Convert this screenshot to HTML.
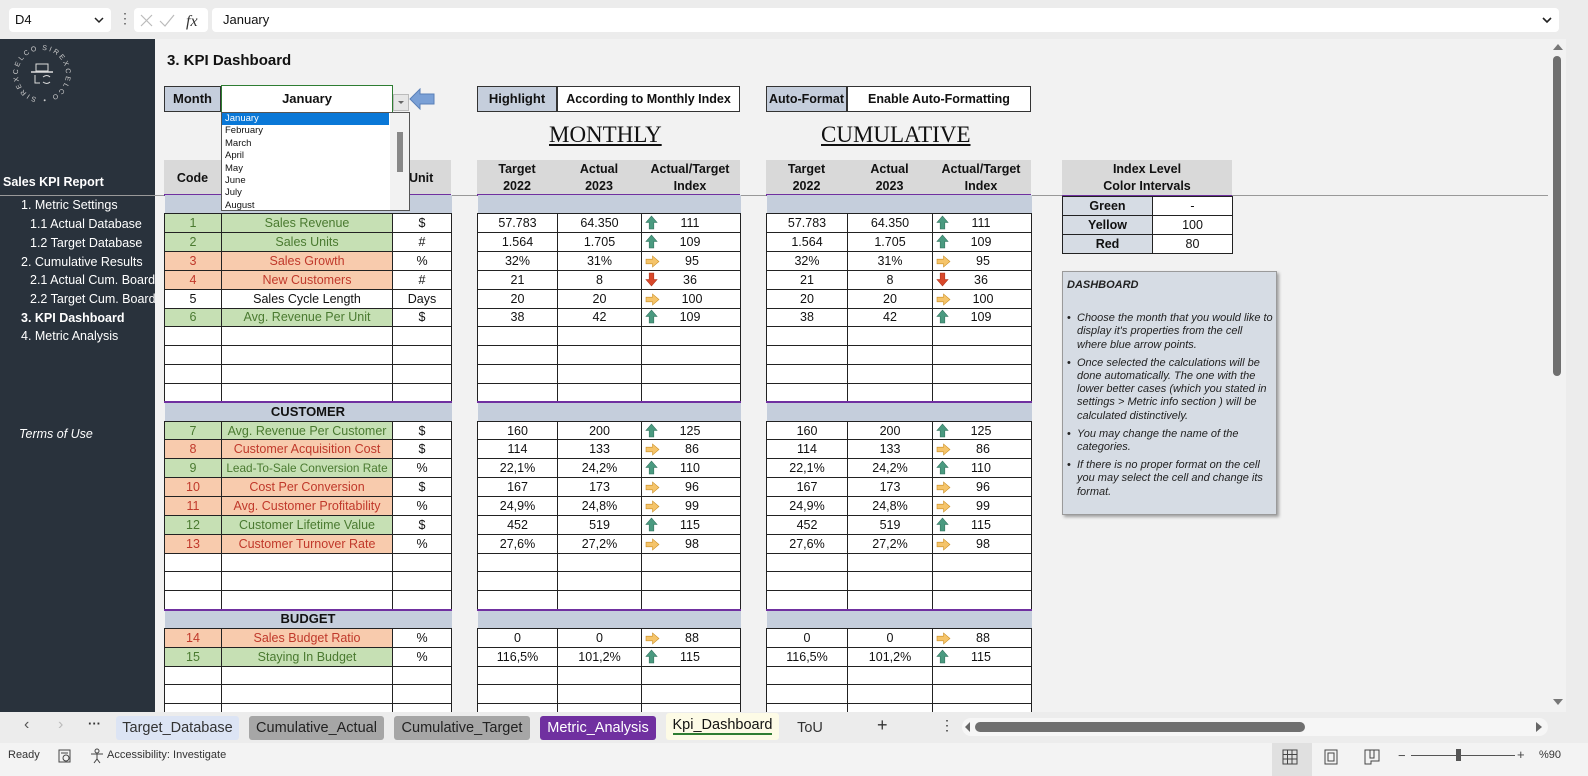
<!DOCTYPE html>
<html><head><meta charset="utf-8">
<style>
*{box-sizing:border-box;margin:0;padding:0}
body{width:1588px;height:776px;overflow:hidden;background:#ececec;font-family:"Liberation Sans",sans-serif;position:relative;color:#111}
.a{position:absolute}
table{border-collapse:collapse;table-layout:fixed;position:absolute}
td{border:1px solid #222;height:18.85px;padding:0;text-align:center;font-size:12.5px;white-space:nowrap;overflow:hidden;line-height:16px;background:#fff}
tr.band td{border:none;border-top:2px solid #7030a0;background:#c5cedc;font-weight:bold;font-size:13px}
tr.band0 td{border:none;background:#c5cedc}
td.g{background:#c6e0b4;color:#4a7a30}
td.o{background:#f8cbad;color:#c0392b}
td.ar{text-align:left;padding-left:3px}
td.ar svg{vertical-align:-3px}
td.ar span{display:inline-block;width:64px;text-align:center}
.hdr{position:absolute;background:#d9d9d9;border-bottom:2px solid #7030a0;font-weight:bold;font-size:12.5px;text-align:center;line-height:17px}
.nav{position:absolute;color:#fff;font-size:12.5px}
.tab{position:absolute;top:716px;height:24px;font-size:14.5px;line-height:24px;text-align:center;border-radius:3px}
</style></head><body>
<svg width="0" height="0" style="position:absolute">
<symbol id="up" viewBox="0 0 14 16"><path d="M7 1 L13 8 H9.5 V15 H4.5 V8 H1 Z" fill="#4a9a80" stroke="#2f6f5a" stroke-width=".6"/></symbol>
<symbol id="rt" viewBox="0 0 16 14"><path d="M1 4.5 H8 V1 L15 7 L8 13 V9.5 H1 Z" fill="#f5c46a" stroke="#c98d22" stroke-width=".6"/></symbol>
<symbol id="dn" viewBox="0 0 14 16"><path d="M4.5 1 H9.5 V8 H13 L7 15 L1 8 H4.5 Z" fill="#d9482b" stroke="#a83018" stroke-width=".6"/></symbol>
</svg>

<div class="a" style="left:0;top:0;width:1588px;height:39px;background:#ececec"></div>
<div class="a" style="left:9px;top:8px;width:102px;height:24px;background:#fff;border-radius:4px;font-size:13px;line-height:24px;padding-left:6px">D4<svg style="position:absolute;right:7px;top:9px" width="10" height="7"><path d="M1 1 L5 5 L9 1" stroke="#222" stroke-width="1.5" fill="none"/></svg></div>
<div class="a" style="left:118px;top:10px;font-size:14px;color:#555">&#8942;</div>
<div class="a" style="left:134px;top:8px;width:74px;height:24px;background:#fff;border-radius:4px"></div>
<svg class="a" style="left:138px;top:12px" width="70" height="18"><path d="M3 3 L14 14 M14 3 L3 14" stroke="#bbb" stroke-width="1.2"/><path d="M22 9 L27 14 L36 3" stroke="#bbb" stroke-width="1.2" fill="none"/><text x="48" y="14" font-family="Liberation Serif" font-style="italic" font-size="16" fill="#333">fx</text></svg>
<div class="a" style="left:212px;top:8px;width:1347px;height:24px;background:#fff;border-radius:4px;font-size:13px;line-height:24px;padding-left:11px">January<svg style="position:absolute;right:6px;top:8px" width="12" height="8"><path d="M2 2 L6 6 L10 2" stroke="#222" stroke-width="1.6" fill="none"/></svg></div>

<div class="a" style="left:155px;top:39px;width:1393px;height:673px;background:#f2f2f2"></div>
<div class="a" style="left:0;top:39px;width:155px;height:673px;background:#29323c"></div>
<div class="a" style="left:0;top:195px;width:1548px;height:1px;background:#999"></div>
<div class="a" style="left:1548px;top:39px;width:18px;height:673px;background:#f2f2f2"></div>
<div class="a" style="left:1553px;top:44px;width:0;height:0;border-left:5px solid transparent;border-right:5px solid transparent;border-bottom:6px solid #777"></div>
<div class="a" style="left:1553px;top:56px;width:8px;height:320px;background:#6f6f6f;border-radius:4px"></div>
<div class="a" style="left:1553px;top:699px;width:0;height:0;border-left:5px solid transparent;border-right:5px solid transparent;border-top:6px solid #777"></div>

<svg class="a" style="left:12px;top:44px" width="60" height="60" viewBox="0 0 60 60">
<defs><path id="cp" d="M30 6 A24 24 0 1 1 29.9 6"/></defs>
<text font-size="7" fill="#ccc" letter-spacing="2.2"><textPath href="#cp">SIREXCELCO • SIREXCELCO •</textPath></text>
<rect x="24" y="20" width="12" height="7" fill="none" stroke="#ddd"/><path d="M19 28 H41" stroke="#ddd" stroke-width="1.5"/>
<path d="M23 31 v8 h5 M31 33 q4 -3 7 0 M31 38 q4 3 7 0" stroke="#ddd" fill="none"/>
</svg>
<div class="nav" style="left:3px;top:175px;font-weight:bold">Sales KPI Report</div>
<div class="nav" style="left:21px;top:198px">1. Metric Settings</div>
<div class="nav" style="left:30px;top:217px">1.1 Actual Database</div>
<div class="nav" style="left:30px;top:236px">1.2 Target Database</div>
<div class="nav" style="left:21px;top:255px">2. Cumulative Results</div>
<div class="nav" style="left:30px;top:273px">2.1 Actual Cum. Board</div>
<div class="nav" style="left:30px;top:292px">2.2 Target Cum. Board</div>
<div class="nav" style="left:21px;top:311px;font-weight:bold">3. KPI Dashboard</div>
<div class="nav" style="left:21px;top:329px">4. Metric Analysis</div>
<div class="nav" style="left:19px;top:427px;font-style:italic">Terms of Use</div>

<div class="a" style="left:167px;top:52px;font-size:15px;font-weight:bold">3. KPI Dashboard</div>

<div class="a" style="left:164px;top:86px;width:57px;height:26px;background:#c5cedc;border:1px solid #333;font-weight:bold;font-size:13px;text-align:center;line-height:24px">Month</div>
<div class="a" style="left:221px;top:85px;width:172px;height:28px;background:#fff;border:1.5px solid #2e7d32;font-weight:bold;font-size:13px;text-align:center;line-height:26px">January</div>
<div class="a" style="left:393px;top:94px;width:16px;height:17px;background:#e6e6e6;border:1px solid #bbb"><div style="margin:6px auto 0;width:0;height:0;border-left:3px solid transparent;border-right:3px solid transparent;border-top:3px solid #666"></div></div>
<svg class="a" style="left:409px;top:88px" width="26" height="22"><path d="M1 11 L11 1 V6 H25 V16 H11 V21 Z" fill="#7aa0d6" stroke="#5a80b8"/></svg>

<div class="a" style="left:477px;top:86px;width:80px;height:26px;background:#c5cedc;border:1px solid #333;font-weight:bold;font-size:13px;text-align:center;line-height:24px">Highlight</div>
<div class="a" style="left:557px;top:86px;width:183px;height:26px;background:#fff;border:1px solid #333;font-weight:bold;font-size:12.5px;text-align:center;line-height:24px">According to Monthly Index</div>
<div class="a" style="left:766px;top:86px;width:81px;height:26px;background:#c5cedc;border:1px solid #333;font-weight:bold;font-size:12.5px;text-align:center;line-height:24px">Auto-Format</div>
<div class="a" style="left:847px;top:86px;width:184px;height:26px;background:#fff;border:1px solid #333;font-weight:bold;font-size:12.5px;text-align:center;line-height:24px">Enable Auto-Formatting</div>

<div class="a" style="left:549px;top:122px;font-family:'Liberation Serif',serif;font-size:23px;text-decoration:underline">MONTHLY</div>
<div class="a" style="left:821px;top:122px;font-family:'Liberation Serif',serif;font-size:23px;text-decoration:underline">CUMULATIVE</div>

<div class="hdr" style="left:164px;top:160px;width:287px;height:36px"><span style="position:absolute;left:0;width:57px;top:10px">Code</span><span style="position:absolute;left:245px;top:10px">Unit</span></div>
<div class="hdr" style="left:477px;top:160px;width:263px;height:36px"><span style="position:absolute;left:0;width:80px;top:1px">Target<br>2022</span><span style="position:absolute;left:80px;width:84px;top:1px">Actual<br>2023</span><span style="position:absolute;left:164px;width:98px;top:1px">Actual/Target<br>Index</span></div>
<div class="hdr" style="left:766px;top:160px;width:265px;height:36px"><span style="position:absolute;left:0;width:81px;top:1px">Target<br>2022</span><span style="position:absolute;left:81px;width:85px;top:1px">Actual<br>2023</span><span style="position:absolute;left:166px;width:98px;top:1px">Actual/Target<br>Index</span></div>
<div class="hdr" style="left:1062px;top:160px;width:170px;height:36px;border-bottom:1px solid #7030a0"><div style="padding-top:1px">Index Level<br>Color Intervals</div></div>

<table style="left:164px;top:195px;width:287px">
<colgroup><col style="width:57px"><col style="width:171px"><col style="width:59px"></colgroup>
<tr class="band0"><td colspan="3"></td></tr>
<tr><td class="g">1</td><td class="g">Sales Revenue</td><td>$</td></tr>
<tr><td class="g">2</td><td class="g">Sales Units</td><td>#</td></tr>
<tr><td class="o">3</td><td class="o">Sales Growth</td><td>%</td></tr>
<tr><td class="o">4</td><td class="o">New Customers</td><td>#</td></tr>
<tr><td>5</td><td>Sales Cycle Length</td><td>Days</td></tr>
<tr><td class="g">6</td><td class="g">Avg. Revenue Per Unit</td><td>$</td></tr>
<tr><td></td><td></td><td></td></tr><tr><td></td><td></td><td></td></tr><tr><td></td><td></td><td></td></tr><tr><td></td><td></td><td></td></tr>
<tr class="band"><td colspan="3">CUSTOMER</td></tr>
<tr><td class="g">7</td><td class="g">Avg. Revenue Per Customer</td><td>$</td></tr>
<tr><td class="o">8</td><td class="o">Customer Acquisition Cost</td><td>$</td></tr>
<tr><td class="g">9</td><td class="g" style="font-size:11.8px">Lead-To-Sale Conversion Rate</td><td>%</td></tr>
<tr><td class="o">10</td><td class="o">Cost Per Conversion</td><td>$</td></tr>
<tr><td class="o">11</td><td class="o">Avg. Customer Profitability</td><td>%</td></tr>
<tr><td class="g">12</td><td class="g">Customer Lifetime Value</td><td>$</td></tr>
<tr><td class="o">13</td><td class="o">Customer Turnover Rate</td><td>%</td></tr>
<tr><td></td><td></td><td></td></tr><tr><td></td><td></td><td></td></tr><tr><td></td><td></td><td></td></tr>
<tr class="band"><td colspan="3">BUDGET</td></tr>
<tr><td class="o">14</td><td class="o">Sales Budget Ratio</td><td>%</td></tr>
<tr><td class="g">15</td><td class="g">Staying In Budget</td><td>%</td></tr>
<tr><td></td><td></td><td></td></tr><tr><td></td><td></td><td></td></tr><tr><td></td><td></td><td></td></tr>
</table>

<!-- dropdown list (on top) -->
<div class="a" style="left:221px;top:112px;width:189px;height:99px;background:#fff;border:1px solid #555;font-size:9.5px;line-height:12.4px;overflow:hidden;z-index:10">
<div style="background:#0a78d7;color:#fff;margin-right:20px;padding-left:3px">January</div>
<div style="padding-left:3px">February<br>March<br>April<br>May<br>June<br>July<br>August</div>
<div style="position:absolute;left:168px;top:0;width:20px;height:98px;background:#f2f2f2"></div>
<div style="position:absolute;left:175px;top:19px;width:6px;height:40px;background:#888"></div>
</div>

<table style="left:477px;top:195px;width:263px">
<colgroup><col style="width:80px"><col style="width:84px"><col style="width:99px"></colgroup>
<tr class="band0"><td colspan="3"></td></tr>
<tr><td>57.783</td><td>64.350</td><td class="ar"><svg width="13" height="15"><use href="#up"/></svg><span>111</span></td></tr>
<tr><td>1.564</td><td>1.705</td><td class="ar"><svg width="13" height="15"><use href="#up"/></svg><span>109</span></td></tr>
<tr><td>32%</td><td>31%</td><td class="ar"><svg width="15" height="13"><use href="#rt"/></svg><span>95</span></td></tr>
<tr><td>21</td><td>8</td><td class="ar"><svg width="13" height="15"><use href="#dn"/></svg><span>36</span></td></tr>
<tr><td>20</td><td>20</td><td class="ar"><svg width="15" height="13"><use href="#rt"/></svg><span>100</span></td></tr>
<tr><td>38</td><td>42</td><td class="ar"><svg width="13" height="15"><use href="#up"/></svg><span>109</span></td></tr>
<tr><td></td><td></td><td></td></tr><tr><td></td><td></td><td></td></tr><tr><td></td><td></td><td></td></tr><tr><td></td><td></td><td></td></tr>
<tr class="band"><td colspan="3"></td></tr>
<tr><td>160</td><td>200</td><td class="ar"><svg width="13" height="15"><use href="#up"/></svg><span>125</span></td></tr>
<tr><td>114</td><td>133</td><td class="ar"><svg width="15" height="13"><use href="#rt"/></svg><span>86</span></td></tr>
<tr><td>22,1%</td><td>24,2%</td><td class="ar"><svg width="13" height="15"><use href="#up"/></svg><span>110</span></td></tr>
<tr><td>167</td><td>173</td><td class="ar"><svg width="15" height="13"><use href="#rt"/></svg><span>96</span></td></tr>
<tr><td>24,9%</td><td>24,8%</td><td class="ar"><svg width="15" height="13"><use href="#rt"/></svg><span>99</span></td></tr>
<tr><td>452</td><td>519</td><td class="ar"><svg width="13" height="15"><use href="#up"/></svg><span>115</span></td></tr>
<tr><td>27,6%</td><td>27,2%</td><td class="ar"><svg width="15" height="13"><use href="#rt"/></svg><span>98</span></td></tr>
<tr><td></td><td></td><td></td></tr><tr><td></td><td></td><td></td></tr><tr><td></td><td></td><td></td></tr>
<tr class="band"><td colspan="3"></td></tr>
<tr><td>0</td><td>0</td><td class="ar"><svg width="15" height="13"><use href="#rt"/></svg><span>88</span></td></tr>
<tr><td>116,5%</td><td>101,2%</td><td class="ar"><svg width="13" height="15"><use href="#up"/></svg><span>115</span></td></tr>
<tr><td></td><td></td><td></td></tr><tr><td></td><td></td><td></td></tr><tr><td></td><td></td><td></td></tr>
</table>

<table style="left:766px;top:195px;width:265px">
<colgroup><col style="width:81px"><col style="width:85px"><col style="width:99px"></colgroup>
<tr class="band0"><td colspan="3"></td></tr>
<tr><td>57.783</td><td>64.350</td><td class="ar"><svg width="13" height="15"><use href="#up"/></svg><span>111</span></td></tr>
<tr><td>1.564</td><td>1.705</td><td class="ar"><svg width="13" height="15"><use href="#up"/></svg><span>109</span></td></tr>
<tr><td>32%</td><td>31%</td><td class="ar"><svg width="15" height="13"><use href="#rt"/></svg><span>95</span></td></tr>
<tr><td>21</td><td>8</td><td class="ar"><svg width="13" height="15"><use href="#dn"/></svg><span>36</span></td></tr>
<tr><td>20</td><td>20</td><td class="ar"><svg width="15" height="13"><use href="#rt"/></svg><span>100</span></td></tr>
<tr><td>38</td><td>42</td><td class="ar"><svg width="13" height="15"><use href="#up"/></svg><span>109</span></td></tr>
<tr><td></td><td></td><td></td></tr><tr><td></td><td></td><td></td></tr><tr><td></td><td></td><td></td></tr><tr><td></td><td></td><td></td></tr>
<tr class="band"><td colspan="3"></td></tr>
<tr><td>160</td><td>200</td><td class="ar"><svg width="13" height="15"><use href="#up"/></svg><span>125</span></td></tr>
<tr><td>114</td><td>133</td><td class="ar"><svg width="15" height="13"><use href="#rt"/></svg><span>86</span></td></tr>
<tr><td>22,1%</td><td>24,2%</td><td class="ar"><svg width="13" height="15"><use href="#up"/></svg><span>110</span></td></tr>
<tr><td>167</td><td>173</td><td class="ar"><svg width="15" height="13"><use href="#rt"/></svg><span>96</span></td></tr>
<tr><td>24,9%</td><td>24,8%</td><td class="ar"><svg width="15" height="13"><use href="#rt"/></svg><span>99</span></td></tr>
<tr><td>452</td><td>519</td><td class="ar"><svg width="13" height="15"><use href="#up"/></svg><span>115</span></td></tr>
<tr><td>27,6%</td><td>27,2%</td><td class="ar"><svg width="15" height="13"><use href="#rt"/></svg><span>98</span></td></tr>
<tr><td></td><td></td><td></td></tr><tr><td></td><td></td><td></td></tr><tr><td></td><td></td><td></td></tr>
<tr class="band"><td colspan="3"></td></tr>
<tr><td>0</td><td>0</td><td class="ar"><svg width="15" height="13"><use href="#rt"/></svg><span>88</span></td></tr>
<tr><td>116,5%</td><td>101,2%</td><td class="ar"><svg width="13" height="15"><use href="#up"/></svg><span>115</span></td></tr>
<tr><td></td><td></td><td></td></tr><tr><td></td><td></td><td></td></tr><tr><td></td><td></td><td></td></tr>
</table>

<table style="left:1062px;top:196px;width:170px">
<colgroup><col style="width:90px"><col style="width:80px"></colgroup>
<tr><td style="background:#d6dce4;font-weight:bold">Green</td><td>-</td></tr>
<tr><td style="background:#d6dce4;font-weight:bold">Yellow</td><td>100</td></tr>
<tr><td style="background:#d6dce4;font-weight:bold">Red</td><td>80</td></tr>
</table>

<div class="a" style="left:1062px;top:271px;width:215px;height:244px;background:#d6dce4;border:1px solid #9a9a9a;box-shadow:2px 2px 3px rgba(0,0,0,.35);font-style:italic;font-size:11px;line-height:13.2px;padding:7px 3px 0 4px;color:#222">
<div style="font-weight:bold">DASHBOARD</div>
<ul style="list-style:none;margin-top:20px">
<li style="position:relative;padding-left:10px;margin-bottom:5px"><span style="position:absolute;left:0;font-style:normal">•</span>Choose the month that you would like to display it's properties from the cell where blue arrow points.</li>
<li style="position:relative;padding-left:10px;margin-bottom:5px"><span style="position:absolute;left:0;font-style:normal">•</span>Once selected the calculations will be done automatically. The one with the lower better cases (which you stated in settings &gt; Metric info section ) will be calculated distinctively.</li>
<li style="position:relative;padding-left:10px;margin-bottom:5px"><span style="position:absolute;left:0;font-style:normal">•</span>You may change the name of the categories.</li>
<li style="position:relative;padding-left:10px"><span style="position:absolute;left:0;font-style:normal">•</span>If there is no proper format on the cell you may select the cell and change its format.</li>
</ul></div>

<div class="a" style="left:0;top:712px;width:1588px;height:31px;background:#ececec"></div>
<div class="a" style="left:24px;top:716px;font-size:16px;color:#555">&#x2039;</div>
<div class="a" style="left:58px;top:716px;font-size:16px;color:#bbb">&#x203A;</div>
<div class="a" style="left:88px;top:716px;font-size:13px;color:#333;font-weight:bold">&middot;&middot;&middot;</div>
<div class="tab" style="left:116px;width:123px;background:#dce4f4;color:#333">Target_Database</div>
<div class="tab" style="left:249px;width:135px;background:#a6a6a6;color:#222">Cumulative_Actual</div>
<div class="tab" style="left:394px;width:136px;background:#a6a6a6;color:#222">Cumulative_Target</div>
<div class="tab" style="left:540px;width:116px;background:#7030a0;color:#fff">Metric_Analysis</div>
<div class="tab" style="left:666px;width:113px;background:#fdfbe6;color:#111;top:713px;height:27px;line-height:24px"><span style="border-bottom:2px solid #2e7d32">Kpi_Dashboard</span></div>
<div class="tab" style="left:790px;width:40px;color:#333">ToU</div>
<div class="a" style="left:877px;top:715px;font-size:18px;color:#333">+</div>
<div class="a" style="left:940px;top:717px;font-size:14px;color:#333">&#8942;</div>
<div class="a" style="left:962px;top:718px;width:586px;height:18px;background:#f6f6f6;border-radius:9px"></div>
<div class="a" style="left:965px;top:722px;width:0;height:0;border-top:5px solid transparent;border-bottom:5px solid transparent;border-right:5px solid #666"></div>
<div class="a" style="left:975px;top:722px;width:330px;height:10px;background:#6f6f6f;border-radius:5px"></div>
<div class="a" style="left:1536px;top:722px;width:0;height:0;border-top:5px solid transparent;border-bottom:5px solid transparent;border-left:6px solid #666"></div>

<div class="a" style="left:0;top:743px;width:1588px;height:33px;background:#f3f3f3"></div>
<div class="a" style="left:8px;top:749px;font-size:11px;color:#333">Ready</div>
<svg class="a" style="left:57px;top:748px" width="16" height="16"><rect x="2" y="2" width="11" height="12" fill="none" stroke="#444"/><circle cx="9" cy="10" r="3" fill="none" stroke="#444"/><path d="M4 5h7" stroke="#444"/></svg>
<svg class="a" style="left:89px;top:748px" width="16" height="16"><circle cx="8" cy="3" r="2" fill="none" stroke="#444"/><path d="M2 6h12 M8 6v5 M5 15l3-4 3 4" stroke="#444" fill="none"/></svg>
<div class="a" style="left:107px;top:749px;font-size:11px;color:#333">Accessibility: Investigate</div>
<div class="a" style="left:1272px;top:743px;width:40px;height:33px;background:#e0e0e0"></div>
<svg class="a" style="left:1282px;top:749px" width="16" height="16"><rect x="1" y="1" width="14" height="14" fill="none" stroke="#444"/><path d="M1 5.5h14M1 10h14M5.5 1v14M10 1v14" stroke="#444"/></svg>
<svg class="a" style="left:1323px;top:749px" width="16" height="16"><rect x="2" y="1" width="12" height="14" fill="none" stroke="#444"/><rect x="5" y="4" width="6" height="8" fill="none" stroke="#444"/></svg>
<svg class="a" style="left:1364px;top:749px" width="16" height="16"><path d="M1 1h14v11H7v3H1z M6 1v8h4V1" fill="none" stroke="#444"/></svg>
<div class="a" style="left:1398px;top:748px;font-size:13px;color:#444">&minus;</div>
<div class="a" style="left:1411px;top:755px;width:104px;height:1px;background:#555"></div>
<div class="a" style="left:1456px;top:749px;width:5px;height:12px;background:#555"></div>
<div class="a" style="left:1517px;top:747px;font-size:13px;color:#444">+</div>
<div class="a" style="left:1539px;top:749px;font-size:11px;color:#333">%90</div>
</body></html>
